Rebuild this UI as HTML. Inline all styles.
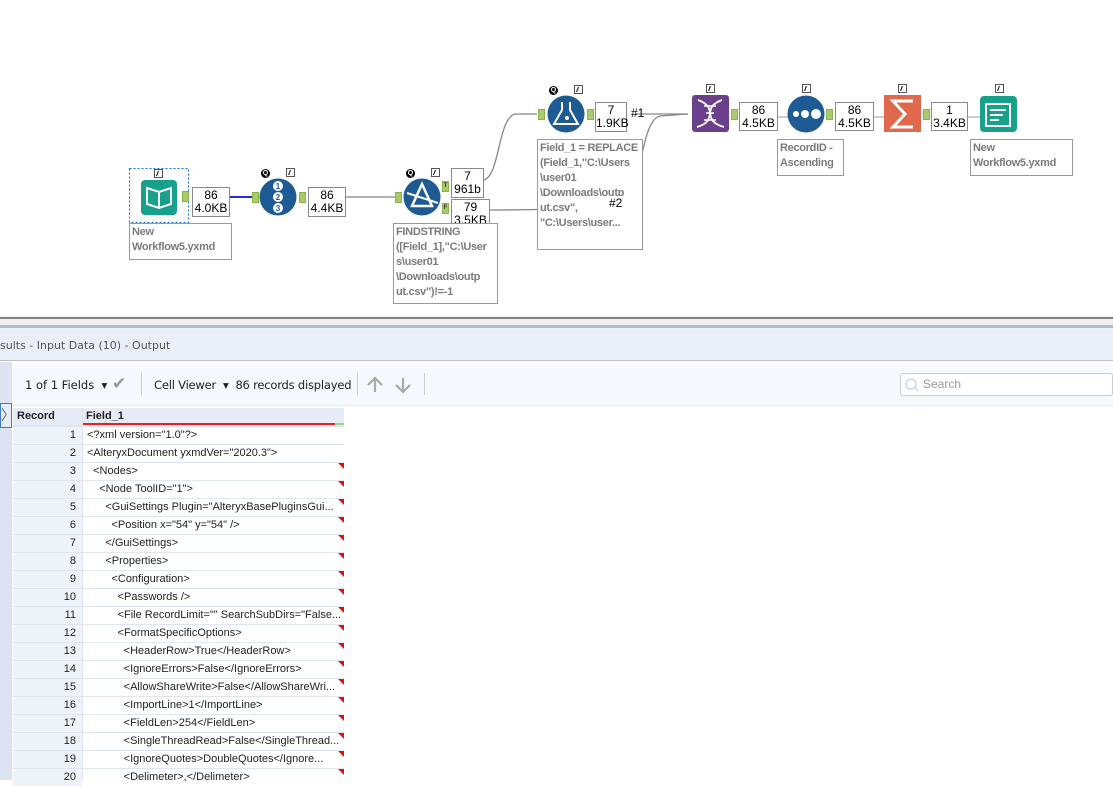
<!DOCTYPE html>
<html><head><meta charset="utf-8"><style>
*{margin:0;padding:0;box-sizing:border-box}
body{width:1113px;height:780px;overflow:hidden;background:#fff;font-family:"Liberation Sans",sans-serif;position:relative}
.a{position:absolute}
.cnt{position:absolute;background:#fff;border:1px solid #8a8a8a;font-size:12px;line-height:13px;text-align:center;color:#000;padding-top:1px}
.lbl{position:absolute;border:1px solid #9a9a9a;background:#fff;font-size:11px;font-weight:bold;color:#7b7b7b;line-height:15px;padding:1px 2px;overflow:hidden;white-space:nowrap;letter-spacing:-0.3px}
.bolt{position:absolute;width:9px;height:9px;border:1px solid #555;background:#fff}
.bolt:after{content:"";position:absolute;left:2px;top:1px;width:3px;height:5px;border-left:1.5px solid #000;transform:skewX(-20deg)}
.q{position:absolute;width:9px;height:9px;border-radius:50%;background:#000;color:#fff;font-size:7px;line-height:9px;text-align:center;font-weight:bold}
.anc{position:absolute;width:7px;height:11px;background:#a8cc6a;border:1px solid #8cb24c}
.row{position:absolute;left:13px;width:331px;height:18px}
.rn{position:absolute;left:0;top:0;width:69px;height:17px;background:#eef2f9;text-align:right;padding-right:6px;font-size:11px;line-height:17px;color:#222}
.fv{position:absolute;left:70px;top:0;width:261px;height:17px;background:#fff;font-size:11px;line-height:17px;color:#222;white-space:nowrap;overflow:hidden}
.tri{position:absolute;right:0;top:0;width:0;height:0;border-top:6px solid #e01010;border-left:6px solid transparent}
</style></head><body>
<svg class="a" style="left:0;top:0" width="1113" height="320">
<line x1="230" y1="197" x2="252" y2="197" stroke="#2a2ae0" stroke-width="2"/>
<line x1="346" y1="197" x2="395" y2="197" stroke="#999" stroke-width="1.5"/>
<path d="M484 180 C500 175 498 118 515 114 L537 114" fill="none" stroke="#888" stroke-width="1.3"/>
<path d="M490 210 C540 210 600 208 625 205 C640 200 640 120 660 116 L688 114" fill="none" stroke="#888" stroke-width="1.3"/>
<line x1="635" y1="114" x2="688" y2="114" stroke="#888" stroke-width="1.3"/>
<line x1="778" y1="117" x2="788" y2="117" stroke="#999"/>
<line x1="874" y1="117" x2="884" y2="117" stroke="#999"/>
<line x1="968" y1="117" x2="980" y2="117" stroke="#999"/>
<rect x="129.5" y="168.5" width="59" height="54" fill="none" stroke="#1a6fd6" stroke-dasharray="2,2"/>
<rect x="141" y="180" width="36" height="35" rx="4" fill="#17a08a"/>
<path d="M147 188 L159 192 L171 188 L171 204 L159 208 L147 204Z M159 192 L159 208" fill="none" stroke="#fff" stroke-width="2"/>
<circle cx="278" cy="197" r="18.5" fill="#1e5a93"/>
<circle cx="278" cy="186" r="5" fill="#fff"/><circle cx="278" cy="197" r="5" fill="#fff"/><circle cx="278" cy="208" r="5" fill="#fff"/>
<text x="278" y="189" font-size="8" text-anchor="middle" fill="#1e5a93" font-weight="bold">1</text>
<text x="278" y="200" font-size="8" text-anchor="middle" fill="#1e5a93" font-weight="bold">2</text>
<text x="278" y="211" font-size="8" text-anchor="middle" fill="#1e5a93" font-weight="bold">3</text>
<circle cx="422" cy="197" r="18.5" fill="#1e5a93"/>
<path d="M412 206 L422 184 L432 206Z" fill="none" stroke="#fff" stroke-width="2.5"/>
<line x1="407" y1="193" x2="438" y2="203" stroke="#fff" stroke-width="2"/>
<circle cx="566" cy="114" r="18.5" fill="#1e5a93"/>
<path d="M562 102 L562 110 L554 124 L578 124 L570 110 L570 102" fill="none" stroke="#fff" stroke-width="2"/>
<circle cx="567" cy="118" r="2" fill="#fff"/>
<rect x="692" y="95" width="37" height="37" rx="3" fill="#6a3f8c"/>
<path d="M698 100 C720 108 700 120 724 127 M722 100 C700 108 720 120 697 127" fill="none" stroke="#fff" stroke-width="1.8"/>
<path d="M704 106 L716 106 M706 113 L714 113 M704 120 L716 120" stroke="#fff" stroke-width="1.5"/>
<circle cx="806" cy="114" r="18.5" fill="#1e5a93"/>
<circle cx="796" cy="114" r="3" fill="#fff"/><circle cx="805" cy="114" r="4" fill="#fff"/><circle cx="816" cy="114" r="5" fill="#fff"/>
<rect x="884" y="95" width="37" height="37" fill="#e0684c"/>
<path d="M913 101 L893 101 L905 114 L893 127 L913 127" fill="none" stroke="#fff" stroke-width="3"/>
<rect x="980" y="96" width="37" height="36" rx="4" fill="#17a08a"/>
<path d="M986 104 L1010 104 L1010 126 L986 126Z M990 110 L1006 110 M990 115 L1003 115 M990 120 L999 120" fill="none" stroke="#fff" stroke-width="2"/>
</svg>
<div class="bolt" style="left:154px;top:169px"></div>
<div class="q" style="left:261px;top:169px">Q</div><div class="bolt" style="left:286px;top:168px"></div>
<div class="q" style="left:406px;top:169px">Q</div><div class="bolt" style="left:431px;top:168px"></div>
<div class="q" style="left:549px;top:86px">Q</div><div class="bolt" style="left:574px;top:85px"></div>
<div class="bolt" style="left:706px;top:84px"></div>
<div class="bolt" style="left:802px;top:84px"></div>
<div class="bolt" style="left:898px;top:84px"></div>
<div class="bolt" style="left:995px;top:84px"></div>
<div class="anc" style="left:182px;top:191px"></div>
<div class="anc" style="left:252px;top:192px"></div>
<div class="anc" style="left:299px;top:192px"></div>
<div class="anc" style="left:395px;top:192px"></div>
<div class="anc" style="left:442px;top:181px;font-size:6px;line-height:9px;color:#333;font-weight:bold;text-align:center">T</div>
<div class="anc" style="left:442px;top:203px;font-size:6px;line-height:9px;color:#333;font-weight:bold;text-align:center">F</div>
<div class="anc" style="left:538px;top:109px"></div>
<div class="anc" style="left:587px;top:109px"></div>
<div class="anc" style="left:731px;top:109px"></div>
<div class="anc" style="left:826px;top:109px"></div>
<div class="anc" style="left:923px;top:109px"></div>
<div class="cnt" style="left:192px;top:187px;width:38px;height:30px">86<br>4.0KB</div>
<div class="cnt" style="left:308px;top:187px;width:38px;height:30px">86<br>4.4KB</div>
<div class="cnt" style="left:451px;top:168px;width:33px;height:30px">7<br>961b</div>
<div class="cnt" style="left:451px;top:199px;width:39px;height:25px">79<br>3.5KB</div>
<div class="cnt" style="left:595px;top:102px;width:32px;height:30px">7<br>1.9KB</div>
<div class="cnt" style="left:739px;top:102px;width:39px;height:29px">86<br>4.5KB</div>
<div class="cnt" style="left:835px;top:102px;width:39px;height:29px">86<br>4.5KB</div>
<div class="cnt" style="left:931px;top:102px;width:37px;height:29px">1<br>3.4KB</div>
<div class="a" style="left:631px;top:106px;font-size:12px">#1</div>
<div class="lbl" style="left:129px;top:223px;width:103px;height:37px">New<br>Workflow5.yxmd</div>
<div class="lbl" style="left:393px;top:223px;width:105px;height:81px">FINDSTRING<br>([Field_1],"C:\User<br>s\user01<br>\Downloads\outp<br>ut.csv")!=-1</div>
<div class="lbl" style="left:537px;top:139px;width:106px;height:111px">Field_1 = REPLACE<br>(Field_1,"C:\Users<br>\user01<br>\Downloads\outp<br>ut.csv",<br>"C:\Users\user...</div>
<div class="a" style="left:609px;top:196px;font-size:12px;background:#fff">#2</div>
<div class="lbl" style="left:777px;top:139px;width:67px;height:37px">RecordID -<br>Ascending</div>
<div class="lbl" style="left:970px;top:139px;width:103px;height:37px">New<br>Workflow5.yxmd</div>
<div class="a" style="left:0;top:316px;width:1113px;height:14px;background:#f0f0f0"></div>
<div class="a" style="left:0;top:317px;width:1113px;height:2px;background:#808080"></div>
<div class="a" style="left:0;top:325px;width:1113px;height:3px;background:#aebcd8"></div>
<div class="a" style="left:0;top:330px;width:1113px;height:31px;background:#e9eef8;border-bottom:1px solid #bfbfbf;color:#555;line-height:32px;font-family:'DejaVu Sans',sans-serif;font-size:11px">sults - Input Data (10) - Output</div>
<div class="a" style="left:0;top:362px;width:12px;height:418px;background:#dde4f1"></div>
<div class="a" style="left:0;top:403px;width:12px;height:25px;border:1px solid #3a7dd0;background:#e8eef8;font-size:14px;line-height:22px;color:#666">〉</div>
<div class="a" style="left:12px;top:364px;width:1101px;height:42px;background:#f5f8fd;border-bottom:1px solid #e4e8ef"></div>
<div class="a" style="left:25px;top:378px;color:#222;font-family:'DejaVu Sans',sans-serif;font-size:11.5px">1 of 1 Fields &nbsp;▾</div>
<div class="a" style="left:112px;top:374px;font-size:17px;color:#999">✔</div>
<div class="a" style="left:141px;top:373px;width:1px;height:22px;background:#ccc"></div>
<div class="a" style="left:154px;top:378px;color:#222;font-family:'DejaVu Sans',sans-serif;font-size:11.5px;letter-spacing:-0.2px">Cell Viewer &nbsp;▾ &nbsp;86 records displayed</div>
<div class="a" style="left:357px;top:373px;width:1px;height:22px;background:#ccc"></div>
<svg class="a" style="left:364px;top:375px" width="50" height="20"><path d="M11 17 L11 3 M4 10 L11 3 L18 10 M39 3 L39 17 M32 10 L39 17 L46 10" fill="none" stroke="#aaa" stroke-width="2.2"/></svg>
<div class="a" style="left:424px;top:373px;width:1px;height:22px;background:#ccc"></div>
<div class="a" style="left:900px;top:373px;width:213px;height:23px;background:#fff;border:1px solid #c7cde0;border-radius:3px;font-size:12px;color:#999;line-height:20px;padding-left:22px">Search</div>
<svg class="a" style="left:904px;top:377px" width="16" height="16"><circle cx="7" cy="7" r="5" fill="none" stroke="#ccd5e6" stroke-width="1.5"/><line x1="10.5" y1="10.5" x2="14" y2="14" stroke="#ccd5e6" stroke-width="1.5"/></svg>
<div class="a" style="left:13px;top:408px;width:331px;height:372px;background:#dfe6f2"></div>
<div class="row" style="top:408px"><div class="rn" style="text-align:left;padding-left:4px;font-weight:bold;background:#e6ebf5">Record</div><div class="fv" style="background:#e6ebf5;font-weight:bold;padding-left:3px">Field_1</div><div class="a" style="left:70px;top:15px;width:252px;height:2px;background:#e82020"></div><div class="a" style="left:322px;top:15px;width:9px;height:2px;background:#8fe07a"></div></div>
<div id="rows"></div>
<script>
var d=['<?xml version="1.0"?>','<AlteryxDocument yxmdVer="2020.3">','  <Nodes>','    <Node ToolID="1">','      <GuiSettings Plugin="AlteryxBasePluginsGui...','        <Position x="54" y="54" />','      </GuiSettings>','      <Properties>','        <Configuration>','          <Passwords />','          <File RecordLimit="" SearchSubDirs="False...','          <FormatSpecificOptions>','            <HeaderRow>True</HeaderRow>','            <IgnoreErrors>False</IgnoreErrors>','            <AllowShareWrite>False</AllowShareWri...','            <ImportLine>1</ImportLine>','            <FieldLen>254</FieldLen>','            <SingleThreadRead>False</SingleThread...','            <IgnoreQuotes>DoubleQuotes</Ignore...','            <Delimeter>,</Delimeter>'];
var h='';for(var i=0;i<d.length;i++){var t=d[i].replace(/&/g,'&amp;').replace(/</g,'&lt;').replace(/>/g,'&gt;').replace(/ /g,'&nbsp;');
h+='<div class="row" style="top:'+(427+i*18)+'px"><div class="rn">'+(i+1)+'</div><div class="fv" style="padding-left:4px">'+t+(i>=2?'<div class="tri"></div>':'')+'</div></div>';}
document.getElementById('rows').outerHTML=h;
</script>
</body></html>
